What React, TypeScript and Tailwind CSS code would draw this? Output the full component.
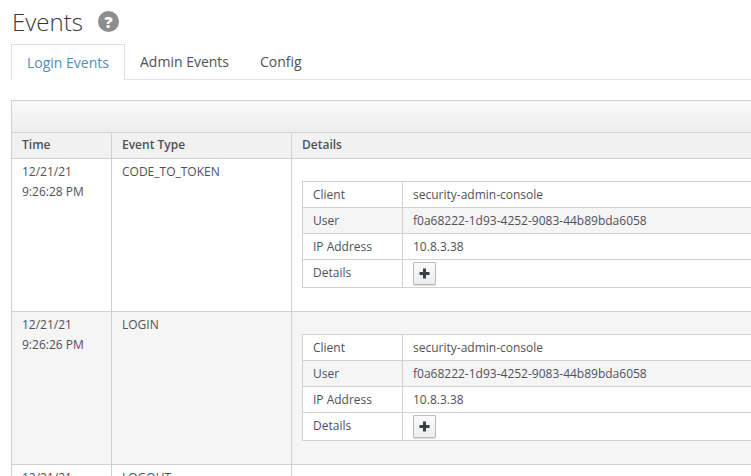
import React from "react";

function Plus() {
  return (
    <button className="flex h-[23px] w-[23px] items-center justify-center rounded-[1px] border border-[#bbbbbb] bg-gradient-to-b from-[#fafafa] to-[#ededed] shadow-[0_1px_1px_rgba(3,3,3,0.15)]">
      <svg width="11" height="11" viewBox="0 0 11 11"><path d="M4 0.5h3v3.5h3.500v3H7v3.500H4V7H0.500V4H4z" fill="#393f44" /></svg>
    </button>
  );
}

function Inner() {
  const rows: [string, React.ReactNode, string, string, string][] = [
    ["Client", "security-admin-console", "bg-white", "h-[26px]", "pb-0"],
    ["User", "f0a68222-1d93-4252-9083-44b89bda6058", "bg-[#f5f5f5]", "h-[26px]", "pb-0"],
    ["IP Address", "10.8.3.38", "bg-white", "h-[26px]", "pb-0"],
    ["Details", <Plus />, "bg-white", "h-[28px]", "pb-[2px]"],
  ];
  return (
    <table className="w-[600px] table-fixed border-collapse">
      <colgroup>
        <col className="w-[100px]" />
        <col />
      </colgroup>
      <tbody>
        {rows.map(([k, v, bg, h, pb]) => (
          <tr key={k} className={`${bg} ${h}`}>
            <td className={`border border-[#d1d1d1] px-[10px] pt-0 align-middle ${pb}`}>{k}</td>
            <td className="border border-[#d1d1d1] px-[10px] py-0 align-middle">{v}</td>
          </tr>
        ))}
      </tbody>
    </table>
  );
}

function Row({ date, time, type, bg }: { date: string; time: string; type: string; bg: string }) {
  return (
    <tr className={`${bg} h-[153px]`}>
      <td className="border border-[#d1d1d1] px-[10px] pt-[3px] pb-0 align-top leading-[20px]">{date}<br />{time}</td>
      <td className="border border-[#d1d1d1] px-[10px] pt-[3px] pb-0 align-top leading-[20px]">{type}</td>
      <td className="border border-[#d1d1d1] px-[10px] pt-[22px] pb-0 align-top"><Inner /></td>
    </tr>
  );
}

export default function App() {
  return (
    <div className="h-[476px] w-[751px] overflow-hidden bg-white font-['Open_Sans',sans-serif] text-[12px] text-[#4d5258]">
      <div className="flex h-[44px] items-start pl-[12px]">
        <h1 className="mt-[4px] text-[24px] leading-[36px] font-light text-[#363636]">Events</h1>
        <svg className="mt-[11px] ml-[15px]" width="21" height="21" viewBox="0 0 21 21">
          <circle cx="10.5" cy="10.5" r="10.5" fill="#8b8d8f" />
          <text x="10.5" y="16.500" textAnchor="middle" fontSize="16" fontWeight="800" fill="#ffffff" fontFamily="Open Sans, sans-serif">?</text>
        </svg>
      </div>
      <div className="ml-[11px] flex h-[36px] w-[740px] border-b border-[#e4e4e4] text-[14px]">
        <div className="flex h-[36px] w-[114px] items-center justify-center border border-b-0 border-[#dddddd] bg-white pb-[1px] text-[#4a90bc]">Login Events</div>
        <div className="ml-[15px] flex h-[35px] items-center text-[#4d5258]">Admin Events</div>
        <div className="ml-[31px] flex h-[35px] items-center text-[#4d5258]">Config</div>
      </div>
      <div className="mt-[20px] ml-[11px] w-[900px]">
        <table className="w-[900px] table-fixed border-collapse">
          <colgroup>
            <col className="w-[100px]" />
            <col className="w-[180px]" />
            <col />
          </colgroup>
          <thead>
            <tr className="h-[32px]">
              <th colSpan={3} className="border border-[#d1d1d1] bg-gradient-to-b from-[#fafafa] to-[#ededed]"></th>
            </tr>
            <tr className="h-[26px] bg-[#f1f1f1] text-left">
              <th className="border border-[#d1d1d1] px-[10px] pt-0 pb-[2px] font-semibold">Time</th>
              <th className="border border-[#d1d1d1] px-[10px] pt-0 pb-[2px] font-semibold">Event Type</th>
              <th className="border border-[#d1d1d1] px-[10px] pt-0 pb-[2px] font-semibold">Details</th>
            </tr>
          </thead>
          <tbody>
            <Row date="12/21/21" time="9:26:28 PM" type="CODE_TO_TOKEN" bg="bg-white" />
            <Row date="12/21/21" time="9:26:26 PM" type="LOGIN" bg="bg-[#f5f5f5]" />
            <Row date="12/21/21" time="9:26:20 PM" type="LOGOUT" bg="bg-white" />
          </tbody>
        </table>
      </div>
    </div>
  );
}
